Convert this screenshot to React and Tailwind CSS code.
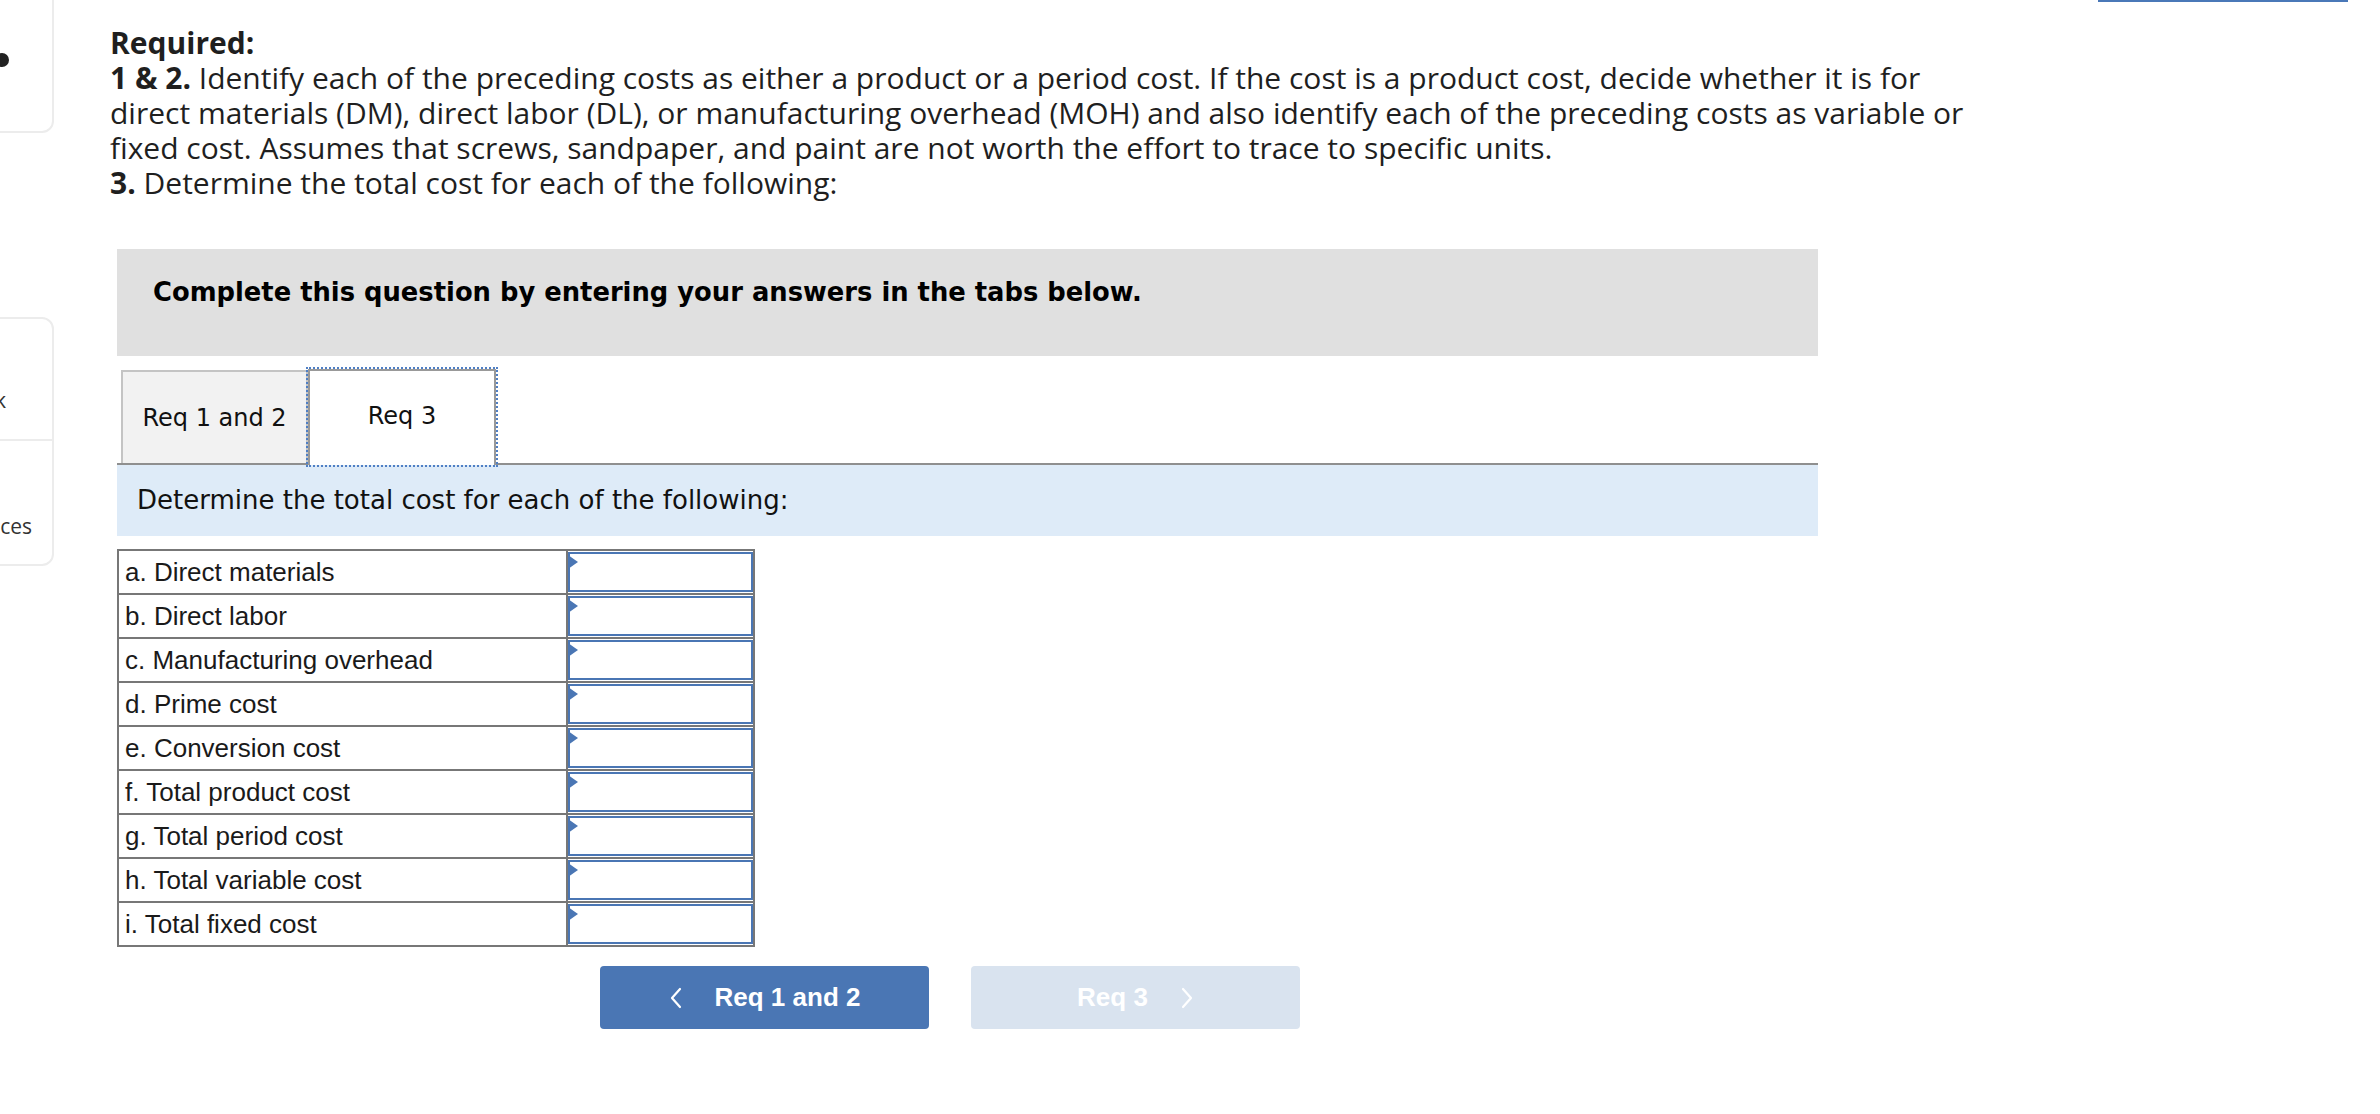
import React from 'react';

const rows = [
  'a. Direct materials',
  'b. Direct labor',
  'c. Manufacturing overhead',
  'd. Prime cost',
  'e. Conversion cost',
  'f. Total product cost',
  'g. Total period cost',
  'h. Total variable cost',
  'i. Total fixed cost',
];

const Chevron = ({ dir = 'left' }) => (
  <svg width="14" height="22" viewBox="0 0 14 22" fill="none">
    {dir === 'left' ? (
      <path d="M11 2 L3 11 L11 20" stroke="white" strokeWidth="2.2" strokeLinecap="round" strokeLinejoin="round" />
    ) : (
      <path d="M3 2 L11 11 L3 20" stroke="white" strokeWidth="2.2" strokeLinecap="round" strokeLinejoin="round" />
    )}
  </svg>
);

const App = () => {
  return (
    <div className="flex w-[2380px] min-h-[1114px] bg-white text-[#1f1f1f] font-['Liberation_Sans',Arial,sans-serif]">
      {/* Side rail (mostly scrolled off screen) */}
      <aside className="w-[54px] shrink-0 overflow-hidden">
        <div className="-mt-[20px] -ml-[160px] w-[214px] h-[153px] rounded-br-[12px] border-2 border-[#ececec] flex justify-end items-start pt-[71px] pr-[43px]">
          <span className="w-[14px] h-[14px] rounded-full bg-[#222]" />
        </div>
        <div className="mt-[184px] -ml-[160px] w-[214px] h-[249px] rounded-r-[12px] border-2 border-[#ececec] flex flex-col font-['Open_Sans',sans-serif]">
          <div className="h-[122px] border-b-2 border-[#ececec] flex items-end justify-end pb-[26px] pr-[46px] text-[21px] leading-[26px] text-[#333]">
            eBook
          </div>
          <div className="flex-1 flex items-end justify-end pb-[25px] pr-[20px] text-[21px] leading-[26px] text-[#333]">
            References
          </div>
        </div>
      </aside>

      {/* Main question */}
      <main className="pl-[56px] pt-[25px] w-[1780px] shrink-0">
        <div className="font-['Open_Sans',sans-serif] text-[30px] leading-[35px] text-[#1f1f1f] whitespace-nowrap">
          <p className="font-bold">Required:</p>
          <p>
            <span className="font-bold">1 &amp; 2.</span> Identify each of the preceding costs as either a product or a period cost. If the cost is a product cost, decide whether it is for
            <br />
            direct materials (DM), direct labor (DL), or manufacturing overhead (MOH) and also identify each of the preceding costs as variable or
            <br />
            fixed cost. Assumes that screws, sandpaper, and paint are not worth the effort to trace to specific units.
          </p>
          <p>
            <span className="font-bold">3.</span> Determine the total cost for each of the following:
          </p>
        </div>

        <div className="mt-[49px] ml-[7px] w-[1701px] h-[107px] bg-[#e0e0e0] pl-[36px] pt-[27px]">
          <p className="font-['DejaVu_Sans',Verdana,sans-serif] font-bold text-[25.8px] leading-[32px] text-black">
            Complete this question by entering your answers in the tabs below.
          </p>
        </div>

        {/* Tabs */}
        <div className="mt-[13px] ml-[7px] w-[1701px] border-b-2 border-[#8f8f8f] flex items-end pl-[4px] font-['DejaVu_Sans',Verdana,sans-serif] text-[24px] text-[#111]">
          <button className="w-[187px] h-[93px] bg-[#f2f2f2] border-2 border-b-0 border-[#c4c4c4] flex items-center justify-center">
            Req 1 and 2
          </button>
          <button className="relative z-10 -mb-[2px] w-[188px] h-[96px] bg-white border-2 border-b-0 border-[#999] outline-2 outline-dotted outline-[#4f7fc4] flex items-center justify-center pb-[4px]">
            Req 3
          </button>
        </div>

        <div className="ml-[7px] w-[1701px] h-[71px] bg-[#deebf8] flex items-center pl-[20px] font-['DejaVu_Sans',Verdana,sans-serif] text-[26px] text-[#111]">
          Determine the total cost for each of the following:
        </div>

        {/* Answer table */}
        <div className="mt-[13px] ml-[7px] w-[638px] border-2 border-[#777]">
          {rows.map((label, i) => (
            <div key={label} className={`flex ${i > 0 ? 'h-[44px] border-t-2 border-[#777]' : 'h-[42px]'}`}>
              <div className="w-[449px] border-r-2 border-[#777] flex items-center pl-[6px] text-[26px] text-[#1a1a1a]">
                {label}
              </div>
              <div className="flex-1 pt-[1px] pb-[1px]">
                <div className="relative h-full border-2 border-[#4a76b4] bg-white">
                  <span className="absolute -left-[2px] top-[1px] w-0 h-0 border-y-[7px] border-y-transparent border-l-[10px] border-l-[#4a76b4]" />
                </div>
              </div>
            </div>
          ))}
        </div>

        {/* Navigation buttons */}
        <div className="mt-[19px] ml-[490px] flex gap-[42px]">
          <button className="w-[329px] h-[63px] rounded-[4px] bg-[#4a76b4] flex items-center justify-center gap-[32px] text-white font-bold text-[26px]">
            <Chevron dir="left" />
            <span>Req 1 and 2</span>
          </button>
          <button className="w-[329px] h-[63px] rounded-[4px] bg-[#d9e3ef] flex items-center justify-center gap-[32px] text-white font-bold text-[26px]">
            <span>Req 3</span>
            <Chevron dir="right" />
          </button>
        </div>
      </main>

      {/* top right strip */}
      <div className="ml-auto mr-[32px] w-[250px] shrink-0">
        <div className="h-[2px] bg-[#4a78b8]" />
      </div>
    </div>
  );
};

export default App;
